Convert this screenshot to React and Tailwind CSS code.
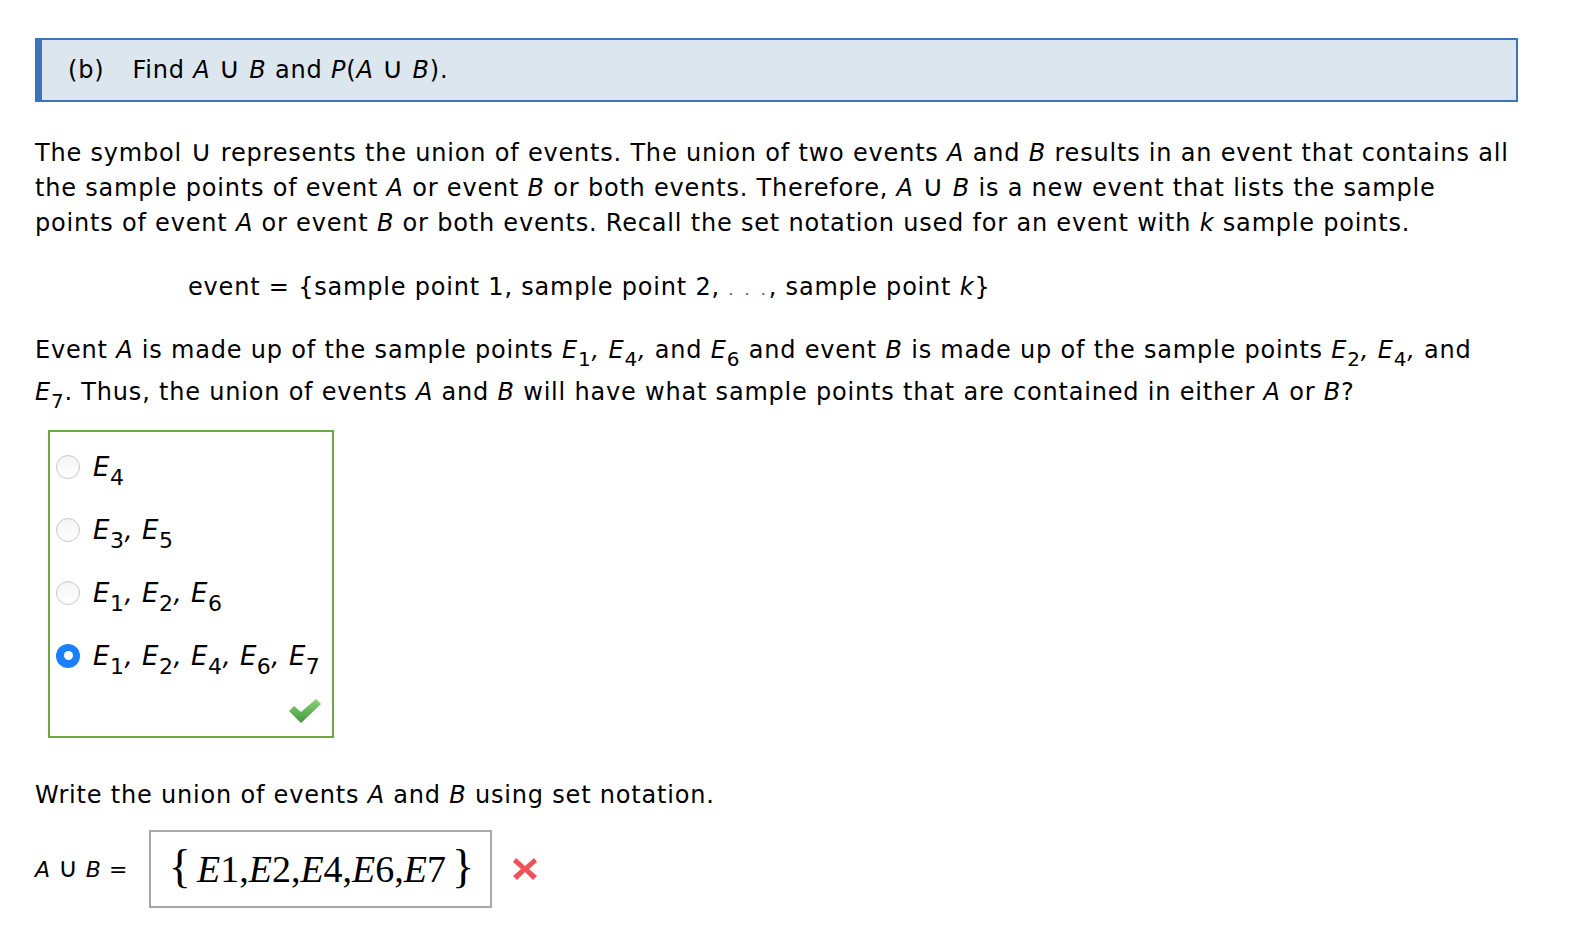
import React from "react";

const V = { fontFamily: '"DejaVu Sans", Verdana, sans-serif' };

function Cup() {
  return <span className="text-[29px] leading-none align-baseline">∪</span>;
}

function E({ n, comma = true, big = false }) {
  return (
    <span className="whitespace-nowrap">
      <i>E</i>
      <span className={"relative leading-none not-italic " + (big ? "top-[9px] text-[22px]" : "top-[8px] text-[20px]")}>{n}</span>
      {comma ? <i>,</i> : null}
    </span>
  );
}

function Radio({ selected }) {
  if (selected) {
    return (
      <span className="w-[24px] h-[24px] rounded-full bg-[#1a7ffb] flex items-center justify-center shrink-0">
        <span className="w-[9px] h-[9px] rounded-full bg-white" />
      </span>
    );
  }
  return (
    <span className="w-[24px] h-[24px] rounded-full border border-[#c8c8c8] bg-gradient-to-b from-[#f4f4f4] to-white shrink-0" />
  );
}

function Option({ selected, children }) {
  return (
    <div className="flex items-center h-[63px] pl-[6px] gap-[13px]">
      <Radio selected={selected} />
      <span className="text-[26px] leading-none tracking-[0.5px]">{children}</span>
    </div>
  );
}

export default function App() {
  return (
    <div className="w-[1596px] h-[944px] bg-white text-black overflow-hidden tracking-[0.8px]" style={V}>
      <div className="pl-[35px] pr-[78px] pt-[38px]">
        <div className="h-[64px] flex items-center border-2 border-[#3b74b8] border-l-[7px] bg-[#dbe6ef] pl-[26px] text-[24px]">
          <span>(b)</span>
          <span className="ml-[28px]">
            Find <i>A</i> <Cup /> <i>B</i> and <i>P</i>(<i>A</i> <Cup /> <i>B</i>).
          </span>
        </div>

        <p className="mt-[34px] text-[24px] leading-[35px]">
          The symbol <Cup /> represents the union of events. The union of two events <i>A</i> and <i>B</i> results in an event that contains all the sample points of event <i>A</i> or event <i>B</i> or both events. Therefore, <i>A</i> <Cup /> <i>B</i> is a new event that lists the sample points of event <i>A</i> or event <i>B</i> or both events. Recall the set notation used for an event with <i>k</i> sample points.
        </p>

        <p className="mt-[29px] ml-[153px] text-[24px] leading-[35px]">
          event = {"{"}sample point 1, sample point 2, <span className="tracking-[3px] text-[16px] text-[#555]">. . .</span>, sample point <i>k</i>{"}"}
        </p>

        <p className="mt-[22px] text-[24px] leading-[42px]">
          Event <i>A</i> is made up of the sample points <E n="1" /> <E n="4" /> and <E n="6" comma={false} /> and event <i>B</i> is made up of the sample points <E n="2" /> <E n="4" /> and <E n="7" comma={false} />. Thus, the union of events <i>A</i> and <i>B</i> will have what sample points that are contained in either <i>A</i> or <i>B</i>?
        </p>

        <div className="mt-[17px] ml-[13px] w-[286px] h-[308px] border-2 border-[#6aa840] pt-[3px] relative">
          <Option><E big n="4" comma={false} /></Option>
          <Option><E big n="3" /> <E big n="5" comma={false} /></Option>
          <Option><E big n="1" /> <E big n="2" /> <E big n="6" comma={false} /></Option>
          <Option selected><E big n="1" /> <E big n="2" /> <E big n="4" /> <E big n="6" /> <E big n="7" comma={false} /></Option>
          <svg className="absolute right-[10px] bottom-[12px]" width="34" height="26" viewBox="0 0 34 26">
            <defs>
              <linearGradient id="gck" x1="0" y1="0" x2="0" y2="1">
                <stop offset="0" stopColor="#8cd07a" />
                <stop offset="1" stopColor="#3f9a3a" />
              </linearGradient>
            </defs>
            <path d="M1 13 L6 8 L13 14 L28 1 L33 6 L13 25 Z" fill="url(#gck)" />
          </svg>
        </div>

        <p className="mt-[40px] text-[24px] leading-[35px]">Write the union of events <i>A</i> and <i>B</i> using set notation.</p>

        <div className="mt-[17px] flex items-center">
          <span className="text-[22px] mr-[21px] tracking-[0.5px]">
            <i>A</i> <span className="text-[27px] leading-none">∪</span> <i>B</i> =
          </span>
          <div
            className="w-[343px] h-[78px] border-2 border-[#a8a8a8] flex items-center pl-[18px] text-[38px] tracking-normal"
            style={{ fontFamily: '"Liberation Serif", "Times New Roman", serif' }}
          >
            <span className="text-[46px] leading-none relative top-[-2px]">{"{"}</span>
            <span className="ml-[6px]">
              <i>E</i>1,<i>E</i>2,<i>E</i>4,<i>E</i>6,<i>E</i>7
            </span>
            <span className="text-[46px] leading-none ml-[6px] relative top-[-2px]">{"}"}</span>
          </div>
          <svg className="ml-[20px]" width="26" height="26" viewBox="0 0 26 26">
            <path d="M4 2 L13 10 L22 2 L25 6 L17 13 L25 20 L21 24 L13 16 L5 24 L1 20 L9 13 L1 6 Z" fill="#f0525a" />
          </svg>
        </div>
      </div>
    </div>
  );
}
